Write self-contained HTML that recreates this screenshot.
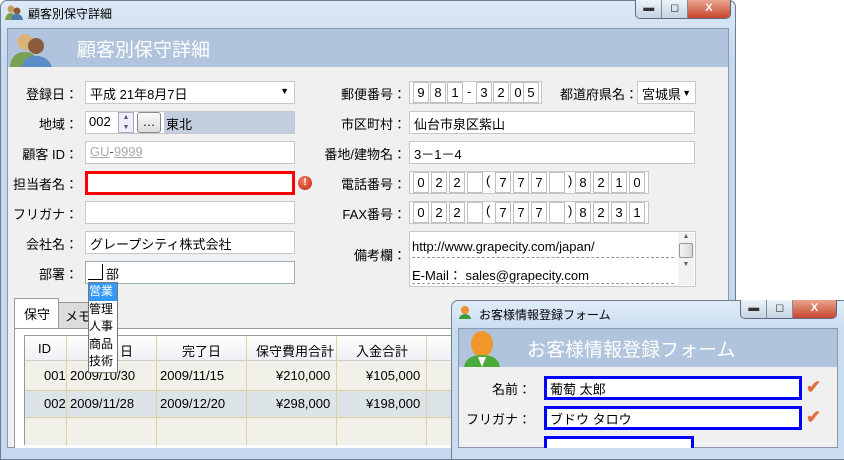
<!DOCTYPE html>
<html><head><meta charset="utf-8"><style>
*{box-sizing:border-box;margin:0;padding:0}
body{width:844px;height:443px;overflow:hidden;background:#fff;font-family:"Liberation Sans","Noto Sans CJK JP",sans-serif;font-size:13px;color:#000;position:relative}
.a{position:absolute}
.win{background:#cfe0f3;border:1px solid #6d7f94;border-radius:7px 7px 0 0}
.lbl{position:absolute;text-align:right;white-space:nowrap}
.fld{position:absolute;background:#fff;border:1px solid #c4c8cc;height:23px;padding:2px 4px;white-space:nowrap}
.box{position:absolute;width:16px;height:21px;border:1px solid #bfbfbf;text-align:center;line-height:19px;background:#fff}
.btns{position:absolute;height:19px;border:1px solid #5a6a80;border-top:none;border-radius:0 0 5px 5px;display:flex;overflow:hidden}
.btns div{height:18px;background:linear-gradient(#eef3f9,#c5d3e3);border-right:1px solid #7c8ca0;text-align:center;color:#333;font-size:11px;line-height:16px}
.btns .x{background:linear-gradient(#e8a590,#c8452c);color:#fff;font-weight:bold;border:none}
.grid div{position:absolute}
</style></head><body>
<div class="a win" style="left:0;top:0;width:736px;height:460px;background:linear-gradient(#dde9f6,#c6d8ee 60px,#c6d8ee)"></div>
<div class="a" style="left:5px;top:4px;width:18px;height:16px"><svg width="18" height="16"><circle cx="6" cy="5" r="3.5" fill="#c89a5a"/><path d="M0 16 Q1 9 6 9 Q11 9 11 16Z" fill="#7a9a50"/><circle cx="12" cy="7" r="3.5" fill="#8a5a3a"/><path d="M6 16 Q7 10 12 10 Q17 10 18 16Z" fill="#4a7ab0"/></svg></div>
<div class="a" style="left:28px;top:5px;font-size:12px">顧客別保守詳細</div>
<div class="btns" style="left:635px;top:0;width:96px"><div style="width:27px">▬</div><div style="width:26px">◻</div><div class="x" style="width:43px">X</div></div>
<div class="a" style="left:7px;top:28px;width:722px;height:420px;background:#f0f0f0;border:1px solid #8a98a8"></div>
<div class="a" style="left:8px;top:29px;width:720px;height:38px;background:#b0c4dd"></div>
<div class="a" style="left:8px;top:30px;width:48px;height:37px"><svg width="48" height="37"><circle cx="17" cy="12" r="8" fill="#d9b47a"/><path d="M2 37 Q3 22 17 22 Q30 22 30 37Z" fill="#7aa054"/><circle cx="28" cy="16" r="8" fill="#8a5a3a"/><path d="M14 37 Q16 26 28 26 Q40 26 44 37Z" fill="#5a8cc8"/></svg></div>
<div class="a" style="left:77px;top:35px;font-size:19px;color:#fff">顧客別保守詳細</div>

<div class="lbl" style="right:766px;top:84px">登録日：</div>
<div class="fld" style="left:85px;top:81px;width:210px">平成 21年8月7日<span style="position:absolute;right:5px;top:4px;font-size:9px">▼</span></div>
<div class="lbl" style="right:766px;top:114px">地域：</div>
<div class="fld" style="left:85px;top:111px;width:210px;padding:0"></div>
<div class="a" style="left:89px;top:114px">002</div>
<div class="a" style="left:118px;top:112px;width:16px;height:21px;border:1px solid #aab;background:#eef;font-size:7px;text-align:center;line-height:10px;color:#557">▲<br>▼</div>
<div class="a" style="left:137px;top:112px;width:24px;height:21px;border:1px solid #888;border-radius:3px;background:linear-gradient(#fafafa,#ddd);text-align:center;line-height:17px">…</div>
<div class="a" style="left:164px;top:112px;width:130px;height:21px;background:#c2cddd;padding:2px 2px">東北</div>
<div class="lbl" style="right:766px;top:144px">顧客 ID：</div>
<div class="fld" style="left:85px;top:141px;width:210px;color:#aaa"><u>GU</u><span style="color:#555">-</span><u>9999</u></div>
<div class="lbl" style="right:766px;top:174px">担当者名：</div>
<div class="a" style="left:85px;top:171px;width:210px;height:24px;border:3px solid #f00;background:#fff"></div>
<div class="a" style="left:298px;top:176px;width:14px;height:14px;border-radius:50%;background:radial-gradient(circle at 40% 35%,#f08060,#c02010);color:#fff;font-size:10px;font-weight:bold;text-align:center;line-height:14px">!</div>
<div class="lbl" style="right:766px;top:204px">フリガナ：</div>
<div class="fld" style="left:85px;top:201px;width:210px"></div>
<div class="lbl" style="right:766px;top:234px">会社名：</div>
<div class="fld" style="left:85px;top:231px;width:210px">グレープシティ株式会社</div>
<div class="lbl" style="right:766px;top:264px">部署：</div>
<div class="fld" style="left:85px;top:261px;width:210px;border-color:#9ab;padding-left:20px">部</div>
<div class="a" style="left:88px;top:279px;width:15px;border-top:1px solid #000"></div>
<div class="a" style="left:102px;top:264px;height:16px;border-left:1px solid #000"></div>

<div class="lbl" style="right:438px;top:84px">郵便番号：</div>
<div class="fld" style="left:409px;top:81px;width:133px;padding:0"></div>
<div class="box" style="left:413px;top:82px">9</div><div class="box" style="left:430px;top:82px">8</div><div class="box" style="left:447px;top:82px">1</div>
<div class="a" style="left:467px;top:84px">-</div>
<div class="box" style="left:476px;top:82px">3</div><div class="box" style="left:493px;top:82px">2</div><div class="box" style="left:510px;top:82px">0</div><div class="box" style="left:523px;top:82px">5</div>
<div class="lbl" style="left:560px;top:84px">都道府県名：</div>
<div class="fld" style="left:637px;top:81px;width:59px">宮城県<span style="position:absolute;right:4px;top:6px;font-size:9px">▼</span></div>
<div class="lbl" style="right:438px;top:114px">市区町村：</div>
<div class="fld" style="left:409px;top:111px;width:286px">仙台市泉区紫山</div>
<div class="lbl" style="right:438px;top:144px">番地/建物名：</div>
<div class="fld" style="left:409px;top:141px;width:286px">3－1－4</div>
<div class="lbl" style="right:438px;top:174px">電話番号：</div>
<div class="fld" style="left:409px;top:171px;width:240px;padding:0"></div>
<div class="lbl" style="right:438px;top:204px">FAX番号：</div>
<div class="fld" style="left:409px;top:201px;width:240px;padding:0"></div>
<div id="ph"></div>
<div class="lbl" style="right:438px;top:245px">備考欄：</div>
<div class="fld" style="left:409px;top:231px;width:287px;height:56px;padding:0"></div>
<div class="a" style="left:412px;top:239px;width:262px;border-bottom:1px dashed #999;height:19px">http://www.grapecity.com/japan/</div>
<div class="a" style="left:412px;top:265px;width:262px;border-bottom:1px dashed #999;height:19px">E-Mail： sales@grapecity.com</div>
<div class="a" style="left:678px;top:233px;width:16px;height:52px;background:#f2f2f2;font-size:7px;color:#666;text-align:center">▲<div style="margin:3px 1px;height:15px;border:1px solid #999;border-radius:2px;background:linear-gradient(90deg,#f4f4f4,#d8d8d8)"></div>▼</div>

<div class="a" style="left:57px;top:302px;width:50px;height:27px;background:#dcdcdc;border:1px solid #999;padding:3px 7px;white-space:nowrap">メモ</div>
<div class="a" style="left:14px;top:298px;width:45px;height:31px;background:#fff;border:1px solid #999;border-bottom:none;padding:5px 9px;white-space:nowrap">保守</div>
<div class="a" style="left:14px;top:328px;width:720px;height:120px;background:#fff;border-top:1px solid #999;border-left:1px solid #999"></div>
<div class="a grid" style="left:24px;top:335px;width:720px;height:110px;border-left:1px solid #999;border-top:1px solid #999;background:#f1f1e9">
 <div style="left:0;top:0;width:700px;height:25px;background:linear-gradient(#fff,#eef0f3);border-bottom:1px solid #ccc"></div>
 <div style="left:0;top:54px;width:700px;height:28px;background:#dde4e8;border-top:1px solid #d8cfa8;border-bottom:1px solid #d8cfa8"></div>
 <div style="left:41px;top:0;height:110px;border-left:1px solid #ddd2a8"></div>
 <div style="left:131px;top:0;height:110px;border-left:1px solid #ddd2a8"></div>
 <div style="left:221px;top:0;height:110px;border-left:1px solid #ddd2a8"></div>
 <div style="left:311px;top:0;height:110px;border-left:1px solid #ddd2a8"></div>
 <div style="left:401px;top:0;height:110px;border-left:1px solid #ddd2a8"></div>
 <div style="left:13px;top:5px">ID</div><div style="left:95px;top:5px">日</div><div style="left:157px;top:5px">完了日</div><div style="left:231px;top:5px">保守費用合計</div><div style="left:331px;top:5px">入金合計</div>
 <div style="left:19px;top:32px">001</div><div style="left:45px;top:32px">2009/10/30</div><div style="left:135px;top:32px">2009/11/15</div><div style="left:251px;top:32px">¥210,000</div><div style="left:341px;top:32px">¥105,000</div>
 <div style="left:19px;top:60px">002</div><div style="left:45px;top:60px">2009/11/28</div><div style="left:135px;top:60px">2009/12/20</div><div style="left:251px;top:60px">¥298,000</div><div style="left:341px;top:60px">¥198,000</div>
</div>
<div class="a" style="left:88px;top:282px;width:30px;height:91px;background:#fff;border:1px solid #777;font-size:12px;line-height:17.6px">
<div style="background:#3399ff;color:#fff">営業</div><div>管理</div><div>人事</div><div>商品</div><div>技術</div></div>

<div class="a win" style="left:451px;top:300px;width:400px;height:160px;background:linear-gradient(#e0ecf8,#cadcf0 30px)"></div>
<div class="a" style="left:459px;top:305px;width:12px;height:14px"><svg width="12" height="14"><circle cx="6" cy="5" r="4" fill="#e8902a"/><path d="M0 14 Q1 9 6 9 Q11 9 12 14Z" fill="#3a9a3a"/></svg></div>
<div class="a" style="left:479px;top:306px;font-size:12px">お客様情報登録フォーム</div>
<div class="btns" style="left:740px;top:300px;width:97px"><div style="width:27px">▬</div><div style="width:26px">◻</div><div class="x" style="width:44px">X</div></div>
<div class="a" style="left:458px;top:328px;width:380px;height:120px;background:#f0f0f0;border:1px solid #8a98a8"></div>
<div class="a" style="left:459px;top:329px;width:378px;height:38px;background:#b0c4dd"></div>
<div class="a" style="left:462px;top:329px;width:40px;height:38px"><svg width="40" height="38"><ellipse cx="20" cy="15" rx="11" ry="13" fill="#f0962a"/><path d="M2 38 Q4 26 20 26 Q36 26 38 38Z" fill="#4aaa3a"/><path d="M16 28 L20 38 L24 28Z" fill="#fff"/></svg></div>
<div class="a" style="left:527px;top:335px;font-size:19px;color:#fff">お客様情報登録フォーム</div>
<div class="lbl" style="right:313px;top:379px">名前：</div>
<div class="a" style="left:544px;top:376px;width:258px;height:24px;border:3px solid #00f;background:#fff;padding:0 3px">葡萄 太郎</div>
<div class="a" style="left:806px;top:377px;color:#e07040;font-size:18px;font-weight:bold">✔</div>
<div class="lbl" style="right:313px;top:409px">フリガナ：</div>
<div class="a" style="left:544px;top:406px;width:258px;height:24px;border:3px solid #00f;background:#fff;padding:0 3px">ブドウ タロウ</div>
<div class="a" style="left:806px;top:407px;color:#e07040;font-size:18px;font-weight:bold">✔</div>
<div class="a" style="left:544px;top:436px;width:150px;height:12px;border:3px solid #00f;border-bottom:none;background:#fff"></div>
<script>
var h='';function row(y,d){var x=[413,431,449,467,495,513,531,549,575,593,611,629];for(var i=0;i<12;i++)h+='<div class="box" style="left:'+x[i]+'px;top:'+y+'px">'+d[i]+'</div>';h+='<div class="a" style="left:486px;top:'+(y+1)+'px">(</div><div class="a" style="left:568px;top:'+(y+1)+'px">)</div>';}
row(172,['0','2','2','','7','7','7','','8','2','1','0']);row(202,['0','2','2','','7','7','7','','8','2','3','1']);
document.getElementById('ph').innerHTML=h;
</script>
</body></html>
